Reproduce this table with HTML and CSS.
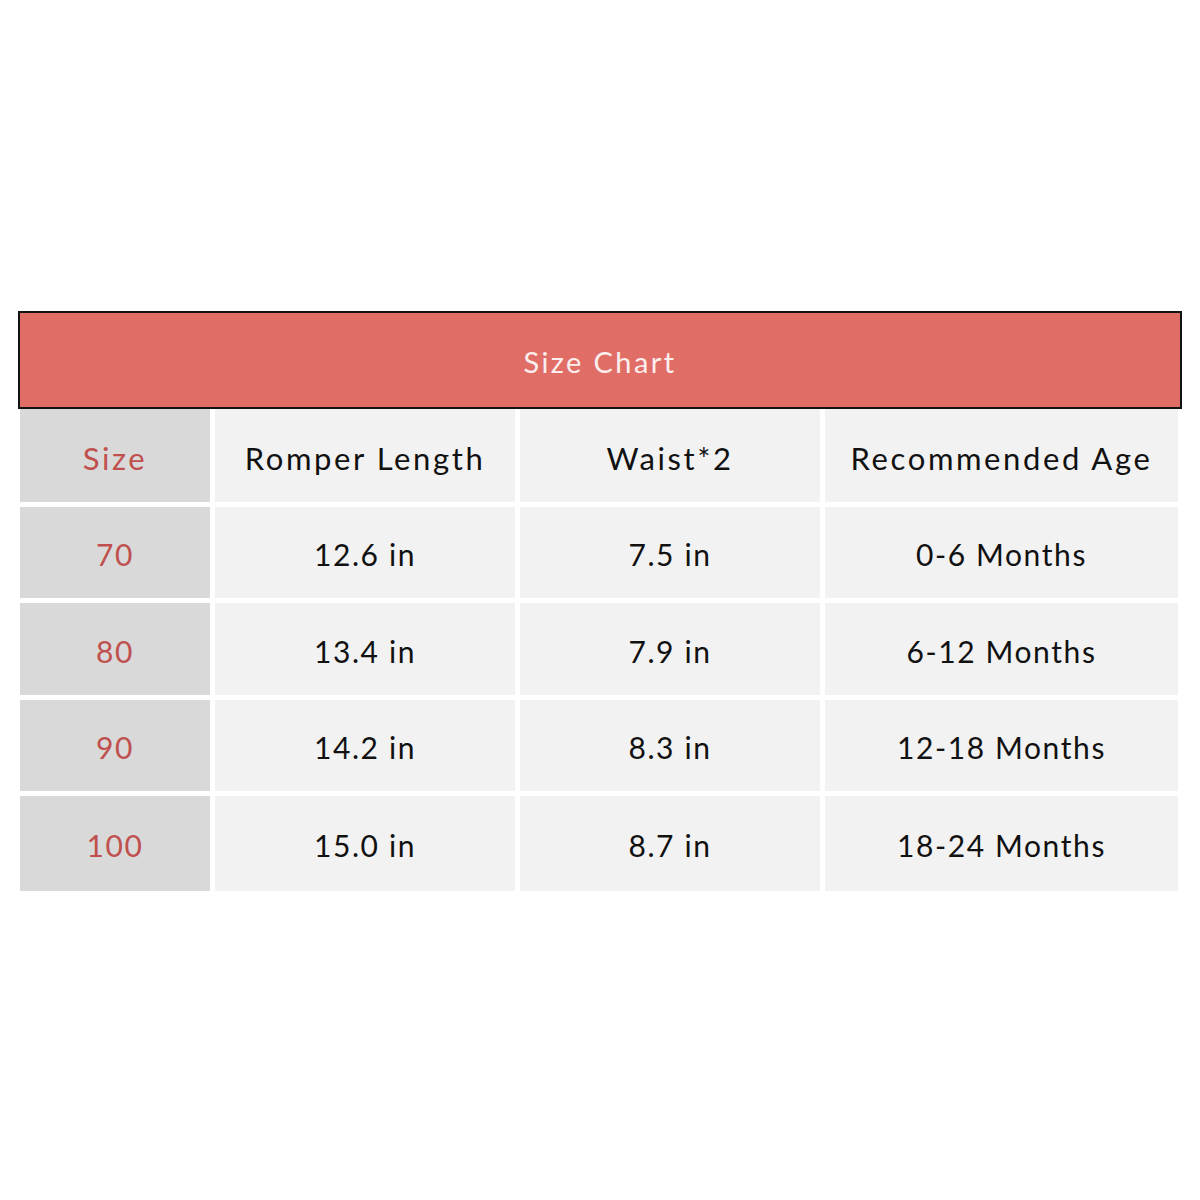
FILE: index.html
```html
<!DOCTYPE html>
<html>
<head>
<meta charset="utf-8">
<link rel="stylesheet" href="styles.css">
</head>
<body>
<div class="page">
  <div class="chart-title">Size Chart</div>
  <div class="chart">
    <div class="cell size head">Size</div>
    <div class="cell head">Romper Length</div>
    <div class="cell head">Waist*2</div>
    <div class="cell head">Recommended Age</div>

    <div class="cell size">70</div>
    <div class="cell">12.6 in</div>
    <div class="cell">7.5 in</div>
    <div class="cell">0-6 Months</div>

    <div class="cell size">80</div>
    <div class="cell">13.4 in</div>
    <div class="cell">7.9 in</div>
    <div class="cell">6-12 Months</div>

    <div class="cell size">90</div>
    <div class="cell">14.2 in</div>
    <div class="cell">8.3 in</div>
    <div class="cell">12-18 Months</div>

    <div class="cell size">100</div>
    <div class="cell">15.0 in</div>
    <div class="cell">8.7 in</div>
    <div class="cell">18-24 Months</div>
  </div>
</div>
</body>
</html>
```
FILE: styles.css
```css
html, body {
  margin: 0;
  padding: 0;
  background: #ffffff;
}
body {
  font-family: Lato, "Open Sans", "Liberation Sans", sans-serif;
}
.page {
  width: 1200px;
  height: 1200px;
  padding: 311px 0 0 18px;
  box-sizing: border-box;
}
.chart-title {
  width: 1164px;
  height: 98px;
  box-sizing: border-box;
  border: 2px solid #111111;
  background: #e16e66;
  color: #fbeeee;
  font-size: 29px;
  letter-spacing: 2.4px;
  display: flex;
  align-items: center;
  justify-content: center;
  padding-top: 2px;
}
.chart {
  margin-left: 2px;
  width: 1158px;
  display: grid;
  grid-template-columns: 190px 300px 300px 353px;
  grid-template-rows: 93px 91px 92px 91px 95px;
  gap: 5px 5px;
}
.cell {
  background: #f2f2f2;
  color: #111111;
  font-size: 30px;
  letter-spacing: 1.6px;
  display: flex;
  align-items: center;
  justify-content: center;
  padding-top: 3px;
  box-sizing: border-box;
}
.cell.head {
  font-size: 31px;
  letter-spacing: 2.6px;
  padding-top: 5px;
}
.cell.size {
  background: #d9d9d9;
  color: #c0504d;
}
```
